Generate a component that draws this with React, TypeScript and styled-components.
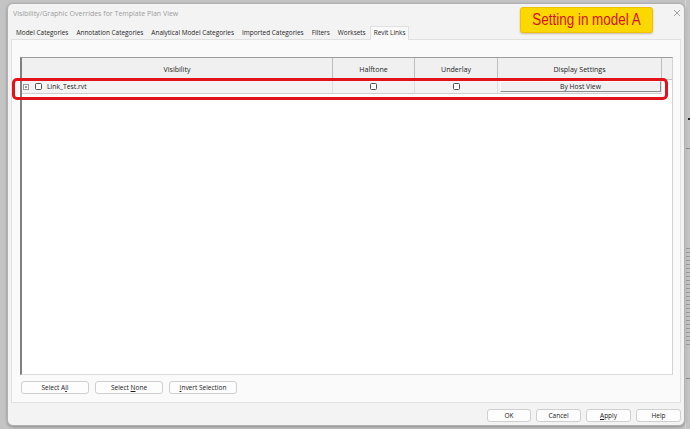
import React from "react";
import styled, { createGlobalStyle } from "styled-components";

const GlobalStyle = createGlobalStyle`
  html, body { margin: 0; padding: 0; }
  body {
    width: 690px;
    height: 429px;
    overflow: hidden;
    background: #c4c4c4;
    font-family: "Open Sans", "Noto Sans", sans-serif;
  }
  #root { height: 100%; }
`;

const Page = styled.div`
  display: flex;
  height: 429px;
  padding: 3px 0 0 7px;
  box-sizing: border-box;
`;

const BackStrip = styled.div`
  flex: 1;
  margin-top: -3px;
  border-left: 1px solid #d6d6d6;
  background:
    linear-gradient(#222, #222) 2px 118px / 3px 2px no-repeat,
    linear-gradient(#8c8c8c, #8c8c8c) 0 148px / 100% 1px no-repeat,
    repeating-linear-gradient(to bottom, transparent 0 3px, #9a9a9a 3px 4px) 0 245px / 100% 100px no-repeat,
    linear-gradient(#8c8c8c, #8c8c8c) 0 378px / 100% 1px no-repeat,
    #c4c4c4;
`;

const Dialog = styled.div`
  position: relative;
  display: flex;
  flex-direction: column;
  width: 678px;
  height: 423px;
  flex: none;
  box-sizing: border-box;
  background: #f3f3f3;
  border: 1px solid #b0b0b0;
  border-radius: 6px;
  box-shadow: 0 1px 3px rgba(0, 0, 0, 0.3);
`;

const TitleBar = styled.div`
  flex: none;
  height: 22px;
  display: flex;
  align-items: center;
  padding: 0 0 4px 5px;
  box-sizing: border-box;
  font-size: 7px;
  color: #9c9c9c;
  white-space: nowrap;
`;

const CloseButton = styled.div`
  position: absolute;
  top: 5px;
  right: 3px;
  width: 8px;
  height: 8px;
  display: flex;
`;

const Callout = styled.div`
  position: absolute;
  left: 512px;
  top: 3px;
  width: 133px;
  height: 26px;
  box-sizing: border-box;
  display: flex;
  align-items: center;
  justify-content: center;
  background: #fdd700;
  border: 1px solid #efc200;
  border-radius: 3px;
  box-shadow: 0 1px 2px rgba(120, 80, 0, 0.35);
`;

const CalloutText = styled.span`
  display: inline-block;
  font-family: "Liberation Sans", Arial, sans-serif;
  font-size: 16px;
  color: #d3121b;
  white-space: nowrap;
  transform: scaleX(0.84);
`;

const TabStrip = styled.div`
  flex: none;
  position: relative;
  z-index: 1;
  display: flex;
  align-items: flex-start;
  height: 13px;
  padding-left: 4px;
`;

const Tab = styled.div<{ $active?: boolean }>`
  box-sizing: border-box;
  height: ${(p) => (p.$active ? "14px" : "13px")};
  padding: 0 3px;
  border: 1px solid ${(p) => (p.$active ? "#e0e0e0" : "transparent")};
  border-bottom: none;
  background: ${(p) => (p.$active ? "#fafafa" : "transparent")};
  font-size: 6.45px;
  line-height: 12px;
  color: #1e1e1e;
  white-space: nowrap;
`;

const Panel = styled.div`
  position: relative;
  flex: none;
  height: 364px;
  margin: 0 3px;
  box-sizing: border-box;
  padding: 17px 7px 8px 8px;
  background: #fafafa;
  border: 1px solid #e0e0e0;
  display: flex;
  flex-direction: column;
`;

const Table = styled.div`
  flex: none;
  height: 318px;
  box-sizing: border-box;
  background: #ffffff;
  border-top: 1px solid #9c9c9c;
  border-left: 2px solid #808080;
  border-right: 1px solid #d4d4d4;
  border-bottom: 1px solid #dcdcdc;
  display: grid;
  grid-template-columns: 311px 82px 83px 164px 1fr;
  grid-template-rows: 22px 14px;
  align-content: start;
`;

const HeaderCell = styled.div<{ $last?: boolean }>`
  box-sizing: border-box;
  display: flex;
  align-items: center;
  justify-content: center;
  background: #f0f0f0;
  border-right: ${(p) => (p.$last ? "none" : "1px solid #bdbdbd")};
  border-bottom: 1px solid #c4c4c4;
  font-size: 7.1px;
  color: #1e1e1e;
  white-space: nowrap;
`;

const RowCell = styled.div<{ $align?: "start" | "center"; $blank?: boolean }>`
  box-sizing: border-box;
  display: flex;
  align-items: center;
  justify-content: ${(p) => (p.$align === "start" ? "flex-start" : "center")};
  background: ${(p) => (p.$blank ? "#ffffff" : "#f3f3f3")};
  border-right: ${(p) => (p.$blank ? "none" : "1px solid #dedede")};
  border-bottom: 1px solid ${(p) => (p.$blank ? "#ffffff" : "#cfcfcf")};
  padding-left: ${(p) => (p.$align === "start" ? "1px" : "0")};
  font-size: 6.8px;
  color: #1a1a1a;
  white-space: nowrap;
`;

const ButtonCell = styled.div`
  box-sizing: border-box;
  display: flex;
  padding: 1px 0 1px 2px;
  background: #f3f3f3;
  border-bottom: 1px solid #cfcfcf;
  border-right: 1px solid #dedede;
`;

const Expander = styled.svg`
  flex: none;
  width: 6px;
  height: 6px;
  margin-right: 6px;
`;

const CheckBox = styled.span<{ $gap?: number }>`
  flex: none;
  display: inline-block;
  box-sizing: border-box;
  width: 7px;
  height: 7px;
  margin-right: ${(p) => p.$gap ?? 0}px;
  border: 1px solid #505050;
  border-radius: 1.5px;
  background: #ffffff;
`;

const CellButton = styled.button`
  flex: 1;
  box-sizing: border-box;
  margin: 0;
  padding: 0;
  height: 11px;
  background: #f0f0f0;
  border: 1px solid #ffffff;
  border-right-color: #8c8c8c;
  border-bottom-color: #8c8c8c;
  font-family: inherit;
  font-size: 6.8px;
  line-height: 9px;
  color: #1a1a1a;
`;

const Highlight = styled.div`
  position: absolute;
  left: 0;
  top: 38px;
  width: 656px;
  height: 22px;
  box-sizing: border-box;
  border: 3px solid #e3131b;
  border-radius: 5px;
  pointer-events: none;
`;

const ButtonRow = styled.div`
  display: flex;
  gap: 6px;
  margin-top: 6px;
  padding-left: 1px;
`;

const Button = styled.button<{ $w: number }>`
  box-sizing: border-box;
  width: ${(p) => p.$w}px;
  height: 13px;
  margin: 0;
  padding: 0;
  background: #fdfdfd;
  border: 1px solid #cfcfcf;
  border-radius: 3px;
  font-family: inherit;
  font-size: 6.5px;
  line-height: 11px;
  color: #1a1a1a;
  white-space: nowrap;
`;

const Footer = styled.div`
  flex: 1;
  display: flex;
  justify-content: flex-end;
  align-items: flex-start;
  gap: 5px;
  padding: 6px 3px 0 0;
`;

const Key = styled.span`
  text-decoration: underline;
  text-underline-offset: 1px;
`;

const tabs = [
  "Model Categories",
  "Annotation Categories",
  "Analytical Model Categories",
  "Imported Categories",
  "Filters",
  "Worksets",
  "Revit Links",
];

export default function App() {
  return (
    <>
      <GlobalStyle />
      <Page>
        <Dialog>
          <TitleBar>Visibility/Graphic Overrides for Template Plan View</TitleBar>
          <CloseButton>
            <svg width="8" height="8" viewBox="0 0 8 8">
              <path d="M1 1 L7 7 M7 1 L1 7" stroke="#8a8a8a" strokeWidth="0.8" fill="none" />
            </svg>
          </CloseButton>
          <Callout>
            <CalloutText>Setting in model A</CalloutText>
          </Callout>
          <TabStrip>
            {tabs.map((t) => (
              <Tab key={t} $active={t === "Revit Links"}>
                {t}
              </Tab>
            ))}
          </TabStrip>
          <Panel>
            <Table>
              <HeaderCell>Visibility</HeaderCell>
              <HeaderCell>Halftone</HeaderCell>
              <HeaderCell>Underlay</HeaderCell>
              <HeaderCell>Display Settings</HeaderCell>
              <HeaderCell $last />
              <RowCell $align="start">
                <Expander viewBox="0 0 6 6">
                  <rect x="0.5" y="0.5" width="5" height="5" fill="#fff" stroke="#9a9a9a" strokeWidth="1" />
                  <path d="M1.8 3 H4.2 M3 1.8 V4.2" stroke="#555" strokeWidth="0.7" />
                </Expander>
                <CheckBox $gap={5} />
                Link_Test.rvt
              </RowCell>
              <RowCell>
                <CheckBox />
              </RowCell>
              <RowCell>
                <CheckBox />
              </RowCell>
              <ButtonCell>
                <CellButton>By Host View</CellButton>
              </ButtonCell>
              <RowCell $blank />
            </Table>
            <ButtonRow>
              <Button $w={68}>
                Select A<Key>l</Key>l
              </Button>
              <Button $w={68}>
                Select <Key>N</Key>one
              </Button>
              <Button $w={68}>
                <Key>I</Key>nvert Selection
              </Button>
            </ButtonRow>
            <Highlight />
          </Panel>
          <Footer>
            <Button $w={44}>OK</Button>
            <Button $w={45}>Cancel</Button>
            <Button $w={45}>
              <Key>A</Key>pply
            </Button>
            <Button $w={45}>Help</Button>
          </Footer>
        </Dialog>
        <BackStrip />
      </Page>
    </>
  );
}
